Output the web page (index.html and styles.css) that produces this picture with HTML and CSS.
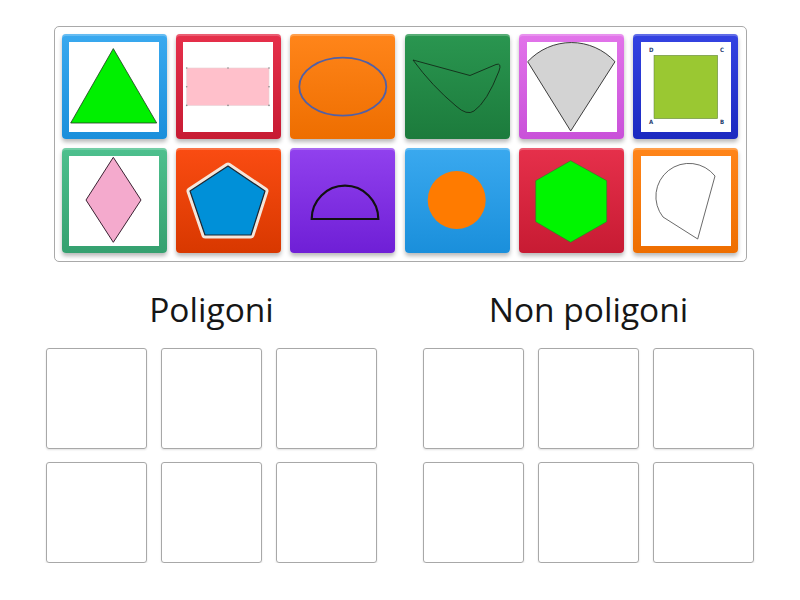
FILE: index.html
```html
<!DOCTYPE html>
<html lang="it">
<head>
  <meta charset="UTF-8">
  <title>Poligoni e non poligoni</title>
  <link rel="stylesheet" href="styles.css">
</head>
<body>
<div class="board">
  <!-- riga 1 -->
  <div class="tile blue">
    <svg class="pic white" viewBox="0 0 90 90"><polygon points="44.3,6.6 1.7,81 87.7,81" fill="#00f000" stroke="#1f3a1f" stroke-width="0.8"/></svg>
  </div>
  <div class="tile red">
    <svg class="pic white" viewBox="0 0 90 90">
      <rect x="3.7" y="26" width="82.3" height="37.4" fill="#ffc0cb" stroke="#e6d0d4" stroke-width="0.6"/>
      <g fill="#8a8a8a">
        <circle cx="3.7" cy="26" r="0.8"/><circle cx="45" cy="26" r="0.8"/><circle cx="86" cy="26" r="0.8"/>
        <circle cx="3.7" cy="44.7" r="0.8"/><circle cx="86" cy="44.7" r="0.8"/>
        <circle cx="3.7" cy="63.4" r="0.8"/><circle cx="45" cy="63.4" r="0.8"/><circle cx="86" cy="63.4" r="0.8"/>
      </g>
    </svg>
  </div>
  <div class="tile orange">
    <svg class="pic" viewBox="0 0 90 90"><ellipse cx="44.8" cy="44.7" rx="43.5" ry="29" fill="none" stroke="#5160a6" stroke-width="1.8"/></svg>
  </div>
  <div class="tile green">
    <svg class="pic" viewBox="0 0 90 90"><path d="M1 18 L58 33.5 L84 22.5 Q90 20.5 87 29 Q75 60 62 69 Q55 74 44 64 Q20 44 1 18 Z" fill="none" stroke="#132a18" stroke-width="0.9"/></svg>
  </div>
  <div class="tile violet">
    <svg class="pic white" viewBox="0 0 90 90"><path d="M43.7 89 L0.7 19.7 A59.3 59.3 0 0 1 88 19.7 Z" fill="#d3d3d3" stroke="#2a2a2a" stroke-width="0.9"/></svg>
  </div>
  <div class="tile navy">
    <svg class="pic white" viewBox="0 0 90 90">
      <rect x="13" y="13.3" width="63.7" height="63.4" fill="#9ac832" stroke="#5a7a40" stroke-width="0.5"/>
      <g class="lbl" fill="#27406e">
        <text x="8" y="10">D</text><text x="79" y="10">C</text>
        <text x="8" y="82">A</text><text x="79" y="82">B</text>
      </g>
    </svg>
  </div>
  <!-- riga 2 -->
  <div class="tile teal">
    <svg class="pic white" viewBox="0 0 90 90"><polygon points="44.3,1.3 72,44 44.3,86.3 17,44" fill="#f4aacd" stroke="#3a2232" stroke-width="1"/></svg>
  </div>
  <div class="tile flame">
    <svg class="pic" viewBox="0 0 90 90">
      <polygon points="45,10 82,35 68,79 22,79 7,35" fill="#f3e6dc" stroke="#f3e6dc" stroke-width="7" stroke-linejoin="round"/>
      <polygon points="45,10 82,35 68,79 22,79 7,35" fill="#0090d8" stroke="#1d2630" stroke-width="1.2" stroke-linejoin="round"/>
    </svg>
  </div>
  <div class="tile purple">
    <svg class="pic" viewBox="0 0 90 90"><path d="M13.7 63 A33.3 33.3 0 0 1 80.3 63 Z" fill="none" stroke="#111" stroke-width="2.2"/></svg>
  </div>
  <div class="tile blue">
    <svg class="pic" viewBox="0 0 90 90"><circle cx="44.7" cy="44" r="29" fill="#ff7b00"/></svg>
  </div>
  <div class="tile red">
    <svg class="pic" viewBox="0 0 90 90"><polygon points="43.7,4.7 79.7,24.7 79.7,65.7 43.7,86.3 8.7,65.7 8.7,24.7" fill="#00f500" stroke="#2a7a2a" stroke-width="0.6"/></svg>
  </div>
  <div class="tile orange">
    <svg class="pic white" viewBox="0 0 90 90"><path d="M56.7 83 L74 20 A31 31 0 1 0 22 61 Z" fill="none" stroke="#444" stroke-width="0.8" stroke-linejoin="round"/></svg>
  </div>
</div>

<div class="groups">
  <div class="group">
    <h2 class="groupTitle">Poligoni</h2>
    <div class="slots">
      <div class="slot"></div><div class="slot"></div><div class="slot"></div>
      <div class="slot"></div><div class="slot"></div><div class="slot"></div>
    </div>
  </div>
  <div class="group">
    <h2 class="groupTitle">Non poligoni</h2>
    <div class="slots">
      <div class="slot"></div><div class="slot"></div><div class="slot"></div>
      <div class="slot"></div><div class="slot"></div><div class="slot"></div>
    </div>
  </div>
</div>
</body>
</html>
```

FILE: styles.css
```css
/*初始化样式*/
body {
  margin: 0;
  background: #fff;
  font-family: "Open Sans", "Liberation Sans", sans-serif;
  color: #111;
}

/* 卡片区 */
.board {
  width: 677px;
  margin: 26px auto 0;
  padding: 7px 7px 8px;
  border: 1px solid #a9a9a9;
  border-radius: 5px;
  display: grid;
  grid-template-columns: repeat(6, 105px);
  grid-auto-rows: 105px;
  column-gap: 9.4px;
  row-gap: 9px;
}

.tile {
  border-radius: 4px;
  display: flex;
  align-items: center;
  justify-content: center;
  box-shadow: 0 3px 4px rgba(0, 0, 0, .28), inset 0 2px 0 rgba(255, 255, 255, .22);
}

.pic {
  width: 90px;
  height: 90px;
  display: block;
}

.pic.white {
  background: #fff;
}

.lbl text {
  font-family: "DejaVu Sans Condensed", "Liberation Sans", sans-serif;
  font-size: 6px;
  font-weight: bold;
}

.tile.blue { background: linear-gradient(#3aa9ef, #1a8fdb); }
.tile.red { background: linear-gradient(#e6304b, #c71b33); }
.tile.orange { background: linear-gradient(#ff851a, #ee6e00); }
.tile.green { background: linear-gradient(#2a9650, #1c7b3c); }
.tile.violet { background: linear-gradient(#e274ea, #c951d9); }
.tile.navy { background: linear-gradient(#3443e2, #1b29c0); }
.tile.teal { background: linear-gradient(#4ec08e, #35a06f); }
.tile.flame { background: linear-gradient(#fa4c12, #d83800); }
.tile.purple { background: linear-gradient(#9141ee, #6f1fd6); }

/* 分组 */
.groups {
  display: flex;
  justify-content: center;
  gap: 46px;
  margin-top: 24px;
}

.group {
  width: 331px;
}

.groupTitle {
  margin: 0 0 16px;
  text-align: center;
  font-size: 33.5px;
  font-weight: normal;
  line-height: normal;
  color: #161616;
}

.slots {
  display: grid;
  grid-template-columns: repeat(3, 101px);
  grid-auto-rows: 101px;
  column-gap: 14px;
  row-gap: 13px;
}

.slot {
  border: 1px solid #a8a8a8;
  border-radius: 3px;
  box-shadow: 0 1px 2px rgba(0, 0, 0, .12);
}
```
